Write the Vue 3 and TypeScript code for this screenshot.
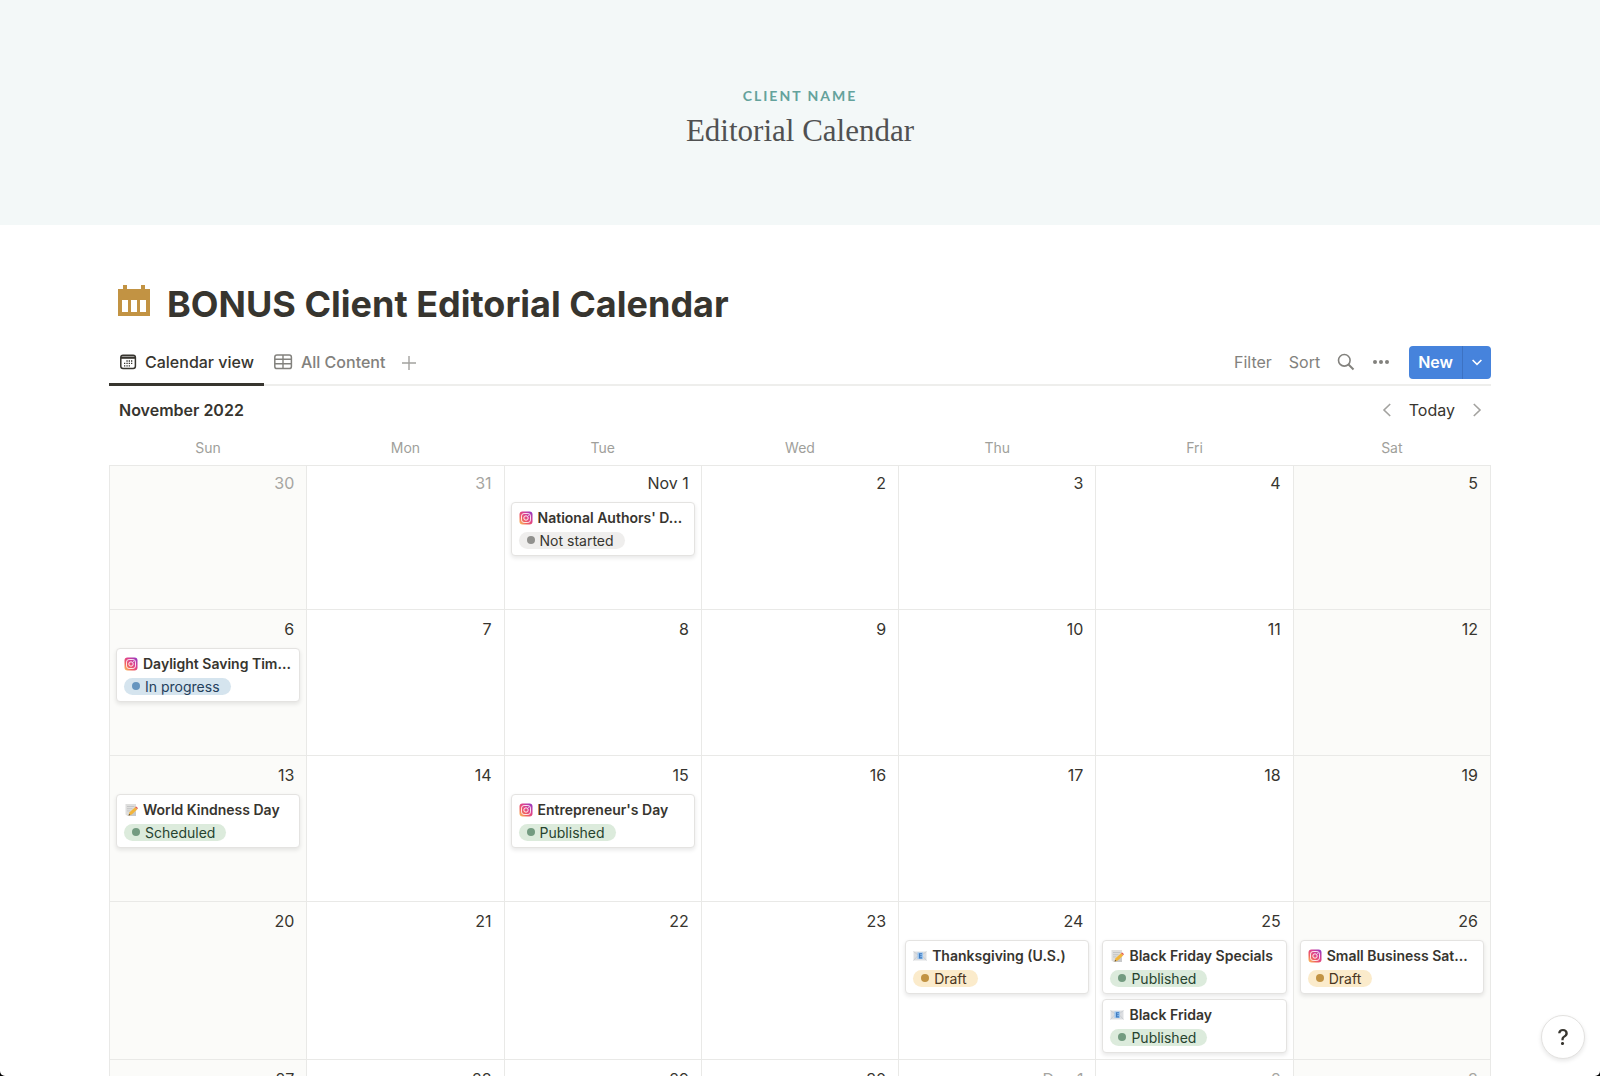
<script setup lang="ts">
type Kind = 'instagram' | 'memo' | 'email'
type Status = 'Not started' | 'In progress' | 'Scheduled' | 'Published' | 'Draft'

interface Entry {
  title: string
  kind: Kind
  status: Status
}

interface Day {
  label: string
  outside?: boolean
  entries: Entry[]
}

const weekdays = ['Sun', 'Mon', 'Tue', 'Wed', 'Thu', 'Fri', 'Sat']

const statusClass: Record<Status, string> = {
  'Not started': 'gray',
  'In progress': 'blue',
  Scheduled: 'green',
  Published: 'green',
  Draft: 'yellow',
}

const entries: Record<string, Entry[]> = {
  'Nov 1': [{ title: "National Authors' D...", kind: 'instagram', status: 'Not started' }],
  '6': [{ title: 'Daylight Saving Tim...', kind: 'instagram', status: 'In progress' }],
  '13': [{ title: 'World Kindness Day', kind: 'memo', status: 'Scheduled' }],
  '15': [{ title: "Entrepreneur's Day", kind: 'instagram', status: 'Published' }],
  '24': [{ title: 'Thanksgiving (U.S.)', kind: 'email', status: 'Draft' }],
  '25': [
    { title: 'Black Friday Specials', kind: 'memo', status: 'Published' },
    { title: 'Black Friday', kind: 'email', status: 'Published' },
  ],
  '26': [{ title: 'Small Business Sat...', kind: 'instagram', status: 'Draft' }],
}

const labels: string[][] = [
  ['30', '31', 'Nov 1', '2', '3', '4', '5'],
  ['6', '7', '8', '9', '10', '11', '12'],
  ['13', '14', '15', '16', '17', '18', '19'],
  ['20', '21', '22', '23', '24', '25', '26'],
  ['27', '28', '29', '30', 'Dec 1', '2', '3'],
]

const weeks: Day[][] = labels.map((row, w) =>
  row.map((label, d) => {
    const outside = (w === 0 && d < 2) || (w === 4 && d > 3)
    return { label, outside, entries: outside ? [] : entries[label] ?? [] }
  }),
)
</script>

<template>
  <div class="page">
    <header class="cover">
      <p class="client">CLIENT NAME</p>
      <p class="cover-title">Editorial Calendar</p>
    </header>

    <main class="content">
      <div class="heading">
        <svg class="page-icon" viewBox="0 0 32 32" aria-hidden="true">
          <path fill="#c29343" fill-rule="evenodd" d="M5 0h4v4h14V0h4v4h5v27H0V4h5zM4 15v12h6V15zm9 0v12h6V15zm9 0v12h6V15z" />
        </svg>
        <h1>BONUS Client Editorial Calendar</h1>
      </div>

      <div class="toolbar">
        <nav class="tabs">
          <button class="tab active" type="button">
            <svg class="tab-icon" viewBox="0 0 18 18" aria-hidden="true">
              <rect x="1.8" y="2.2" width="14.6" height="13.2" rx="2.2" fill="none" stroke="currentColor" stroke-width="1.5" />
              <path d="M2 3.5h14v2.3H2z" fill="currentColor" />
              <path d="M7.4 8h1.3m1 0H11m1 0h1.3M5 10.4h1.3m1.1 0h1.3m1 0H11m1 0h1.3M5 12.8h1.3m1.1 0h1.3m1 0H11" stroke="currentColor" stroke-width="1.3" />
            </svg>
            <span>Calendar view</span>
          </button>
          <button class="tab" type="button">
            <svg class="tab-icon wide" viewBox="0 0 20 18" aria-hidden="true">
              <rect x="1.8" y="2" width="16.6" height="13.6" rx="2.2" fill="none" stroke="currentColor" stroke-width="1.5" />
              <path d="M2 6.3h16M2 10.8h16M10 2v13.6" stroke="currentColor" stroke-width="1.4" />
            </svg>
            <span>All Content</span>
          </button>
          <button class="add" type="button" aria-label="Add view">
            <svg width="16" height="16" viewBox="0 0 16 16"><path d="M8 1v14M1 8h14" stroke="#a3a29f" stroke-width="1.4" /></svg>
          </button>
        </nav>
        <div class="actions">
          <button class="link" type="button">Filter</button>
          <button class="link" type="button">Sort</button>
          <button class="icon-button" type="button" aria-label="Search">
            <svg width="18" height="18" viewBox="0 0 18 18"><circle cx="7.3" cy="7.3" r="5.8" fill="none" stroke="#82817d" stroke-width="1.6" /><path d="m11.5 11.5 5 5" stroke="#82817d" stroke-width="2" /></svg>
          </button>
          <button class="icon-button" type="button" aria-label="More options">
            <svg width="18" height="18" viewBox="0 0 18 18" fill="#82817d"><circle cx="3" cy="9" r="2" /><circle cx="9" cy="9" r="2" /><circle cx="15" cy="9" r="2" /></svg>
          </button>
          <div class="new">
            <button class="new-main" type="button">New</button>
            <button class="new-more" type="button" aria-label="New from template">
              <svg width="12" height="12" viewBox="0 0 12 12"><path d="m1.6 4 4.4 4.4L10.4 4" fill="none" stroke="#fff" stroke-width="1.6" /></svg>
            </button>
          </div>
        </div>
      </div>

      <div class="month-bar">
        <h2>November 2022</h2>
        <div class="pager">
          <button class="icon-button" type="button" aria-label="Previous month">
            <svg width="10" height="14" viewBox="0 0 10 14"><path d="M8.2 1 2 7l6.2 6" fill="none" stroke="#a3a29f" stroke-width="1.6" /></svg>
          </button>
          <button class="today" type="button">Today</button>
          <button class="icon-button" type="button" aria-label="Next month">
            <svg width="10" height="14" viewBox="0 0 10 14"><path d="M1.8 1 8 7l-6.2 6" fill="none" stroke="#a3a29f" stroke-width="1.6" /></svg>
          </button>
        </div>
      </div>

      <table class="calendar">
        <thead>
          <tr>
            <th v-for="name in weekdays" :key="name" scope="col">{{ name }}</th>
          </tr>
        </thead>
        <tbody>
          <tr v-for="(week, w) in weeks" :key="w">
            <td v-for="(day, d) in week" :key="d" :class="{ weekend: d === 0 || d === 6 }">
              <div class="date" :class="{ outside: day.outside }">{{ day.label }}</div>
              <div v-if="day.entries.length" class="cards">
                <a v-for="entry in day.entries" :key="entry.title" class="card" href="#">
                  <span class="card-title">
                    <svg v-if="entry.kind === 'instagram'" class="kind" viewBox="0 0 14 14" aria-hidden="true">
                      <defs>
                        <linearGradient id="insta" x1="0" y1="1" x2="1" y2="0">
                          <stop offset="0" stop-color="#fdd060" />
                          <stop offset="0.3" stop-color="#f0625e" />
                          <stop offset="0.6" stop-color="#dc3f8f" />
                          <stop offset="1" stop-color="#8a3ac8" />
                        </linearGradient>
                      </defs>
                      <rect x="0.5" y="0.5" width="13" height="13" rx="3" fill="url(#insta)" />
                      <rect x="2.5" y="2.5" width="9" height="9" rx="2.6" fill="none" stroke="#fff" stroke-opacity="0.85" />
                      <circle cx="7" cy="7" r="2.2" fill="none" stroke="#fff" stroke-opacity="0.9" />
                      <circle cx="9.7" cy="4.3" r="0.5" fill="#fff" />
                    </svg>
                    <svg v-else-if="entry.kind === 'memo'" class="kind" viewBox="0 0 14 14" aria-hidden="true">
                      <path d="M1.5 1h10.500v12H3.500l-2-1.5z" fill="#dededd" />
                      <path d="M3 3.500h7.500M3 5.700h5.500M3 7.900h3.500" stroke="#b9babc" stroke-width="0.7" />
                      <path d="M3.500 13H12V8z" fill="#c8c9ca" />
                      <path d="m4.600 12.500 1-3.300 5.400-5 2.200 2.200-5.400 5.200z" fill="#f2b53b" />
                      <path d="m11 4.200.9-.8q1.300 0 2 2l-.8.9z" fill="#e5604d" />
                      <path d="m4.600 12.500.5-1.700 1.200 1.200z" fill="#54402c" />
                    </svg>
                    <svg v-else class="kind" viewBox="0 0 14 14" aria-hidden="true">
                      <path d="M0.500 2.500h13v9h-13z" fill="#dcdee1" />
                      <path d="m.5 2.500 6.500 5 6.500-5M.5 11.500l4.500-5m8.500 5L9 6.500" fill="none" stroke="#c3c7cc" stroke-width="0.7" />
                      <path d="M4.500 3.500h5.500v6.500H4.500z" fill="#9cc6f0" />
                      <path d="M9 4.700H6.600v4.200H9M6.600 6.800h2.200" fill="none" stroke="#3b78be" stroke-width="1.100" />
                    </svg>
                    <span class="card-name">{{ entry.title }}</span>
                  </span>
                  <span class="tag" :class="statusClass[entry.status]">{{ entry.status }}</span>
                </a>
              </div>
            </td>
          </tr>
        </tbody>
      </table>
    </main>

    <button class="help" type="button" aria-label="Help">?</button>
  </div>
</template>

<style>
html,
body {
  background: #000;
}
</style>

<style scoped>
.page {
  height: 100vh;
  overflow-y: auto;
  scrollbar-width: none;
  border-radius: 0 0 5px 5px;
  background: #fff;
  color: #37352f;
  font-family: Inter, "Liberation Sans", sans-serif;
  font-size: 16px;
  line-height: 24px;
}

button {
  margin: 0;
  padding: 0;
  border: 0;
  background: none;
  color: inherit;
  font: inherit;
  cursor: pointer;
}

svg {
  display: block;
  flex: none;
}

.cover {
  display: flex;
  flex-direction: column;
  align-items: center;
  box-sizing: border-box;
  height: 225px;
  padding-top: 86px;
  background: #f3f8f8;
}

.cover p {
  margin: 0;
}

.client {
  color: #64a29c;
  font-family: Lato, sans-serif;
  font-size: 14px;
  font-weight: 700;
  line-height: 20px;
  letter-spacing: 2px;
}

.cover-title {
  color: #505152;
  font-family: "Liberation Serif", serif;
  font-size: 31px;
  line-height: 50px;
}

.content {
  padding: 55px 109px 0;
}

.heading {
  display: flex;
  align-items: flex-start;
  gap: 17px;
  padding-left: 9px;
}

.page-icon {
  width: 32px;
  height: 32px;
  padding-top: 5px;
}

h1 {
  margin: 0;
  font-size: 36px;
  font-weight: 700;
  line-height: 48px;
}

.toolbar {
  display: flex;
  justify-content: space-between;
  height: 56px;
  border-bottom: 2px solid #eeeeec;
}

.tabs,
.actions {
  display: flex;
  align-items: flex-end;
}

.tab {
  display: flex;
  align-items: center;
  gap: 8px;
  height: 46px;
  margin-bottom: -2px;
  padding: 0 9px;
  border-bottom: 3px solid transparent;
  box-sizing: border-box;
  color: #82817d;
  font-weight: 500;
}

.tab.active {
  padding: 0 10px;
  border-bottom-color: #37352f;
  color: #37352f;
}

.tab-icon {
  width: 18px;
  height: 18px;
}

.tab-icon.wide {
  width: 20px;
}

.add {
  margin: 0 0 13px 7px;
}

.actions {
  align-items: center;
  padding-top: 12px;
  gap: 17px;
}

.link {
  color: #82817d;
}

.new {
  display: flex;
  height: 33px;
  margin-left: 2px;
  border-radius: 4px;
  background: #4683dc;
  color: #fff;
}

.new-main {
  padding: 0 9px;
  font-weight: 600;
}

.new-more {
  display: flex;
  align-items: center;
  padding: 0 8px;
  border-left: 1px solid #3d72c2;
}

.month-bar {
  display: flex;
  align-items: center;
  justify-content: space-between;
  height: 48px;
  padding: 0 9px 0 10px;
}

h2 {
  margin: 0;
  font-size: 16px;
  font-weight: 600;
}

.pager {
  display: flex;
  align-items: center;
  gap: 17px;
}

.calendar {
  width: 100%;
  border-collapse: collapse;
  table-layout: fixed;
}

th {
  height: 31px;
  padding: 0 0 2px;
  box-sizing: border-box;
  color: #a09f9b;
  font-size: 14px;
  font-weight: 400;
}

td {
  height: 146px;
  padding: 7px 6px 6px;
  border: 1px solid #e9e9e7;
  box-sizing: border-box;
  vertical-align: top;
}

tr:first-child td {
  height: 144px;
  padding-top: 5px;
}

.weekend {
  background: #fbfbf9;
}

.date {
  padding-right: 6px;
  text-align: right;
}

.outside {
  color: #a6a5a1;
}

.cards {
  display: flex;
  flex-direction: column;
  gap: 5px;
  padding-top: 7px;
}

.card {
  display: flex;
  flex-direction: column;
  align-items: flex-start;
  gap: 5px;
  height: 54px;
  box-sizing: border-box;
  padding: 6px 7px;
  border: 1px solid #e4e3e1;
  border-radius: 4px;
  background: #fff;
  box-shadow: 0 2px 4px rgba(15, 15, 15, 0.1);
  color: inherit;
  text-decoration: none;
}

.card-title {
  display: flex;
  align-items: center;
  gap: 5px;
  width: 100%;
  font-size: 14px;
  font-weight: 600;
  line-height: 18px;
}

.card-name {
  white-space: nowrap;
}

.kind {
  width: 14px;
  height: 14px;
}

.tag {
  display: flex;
  align-items: center;
  gap: 5px;
  padding: 0 11px 0 8px;
  border-radius: 9px;
  font-size: 14px;
  line-height: 17px;
}

.tag::before {
  width: 8px;
  height: 8px;
  border-radius: 50%;
  content: "";
}

.gray {
  background: #efeeed;
}

.gray::before {
  background: #91918e;
}

.blue {
  background: #d5e4ee;
  color: #24405c;
}

.blue::before {
  background: #6695bf;
}

.green {
  background: #dcebdc;
  color: #27432f;
}

.green::before {
  background: #739b80;
}

.yellow {
  background: #fbebcb;
  color: #493521;
}

.yellow::before {
  background: #c29343;
}

.help {
  position: fixed;
  right: 15px;
  bottom: 17px;
  width: 44px;
  height: 44px;
  border: 1px solid #e2e1df;
  border-radius: 50%;
  background: #fff;
  box-shadow: 0 2px 4px rgba(15, 15, 15, 0.1);
  font-size: 22px;
  font-weight: 500;
}
</style>
